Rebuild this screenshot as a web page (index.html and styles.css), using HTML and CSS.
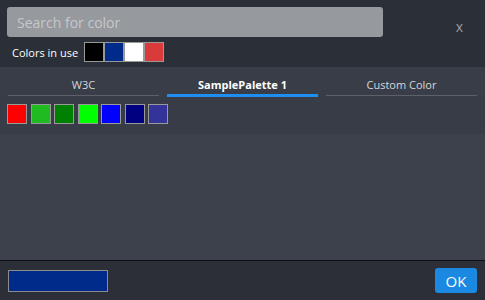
FILE: index.html
```html
<!DOCTYPE html>
<html lang="en">
<head>
  <meta charset="UTF-8">
  <title>Color Picker</title>
  <link rel="stylesheet" href="styles.css">
</head>
<body>
  <div class="picker">
    <div class="header">
      <div class="search-row">
        <input class="search" type="text" placeholder="Search for color">
        <span class="close">x</span>
      </div>
      <div class="in-use">
        <span class="in-use-label">Colors in use</span>
        <div class="swatch" style="background:#000000"></div>
        <div class="swatch" style="background:#002b8a"></div>
        <div class="swatch" style="background:#ffffff"></div>
        <div class="swatch" style="background:#d93a3a"></div>
      </div>
    </div>

    <div class="tabs">
      <div class="tab">W3C</div>
      <div class="tab active">SamplePalette 1</div>
      <div class="tab">Custom Color</div>
    </div>

    <div class="palette">
      <div class="swatch" style="background:#ff0000"></div>
      <div class="swatch" style="background:#20bb20"></div>
      <div class="swatch" style="background:#008000"></div>
      <div class="swatch" style="background:#00ff00"></div>
      <div class="swatch" style="background:#0000ff"></div>
      <div class="swatch" style="background:#000080"></div>
      <div class="swatch" style="background:#333399"></div>
    </div>

    <div class="content"></div>

    <div class="footer">
      <div class="current"></div>
      <button class="ok">OK</button>
    </div>
  </div>
</body>
</html>
```
FILE: styles.css
```css
body {
  margin: 0;
  font-family: "Open Sans", sans-serif;
  background-color: #2b2f38;
}

.picker {
  height: 300px;
  display: flex;
  flex-direction: column;
}

.header {
  padding: 7px 7px 5px 7px;
  background-color: #2b2f38;
}

.search-row {
  display: flex;
}

.search {
  width: 376px;
  height: 30px;
  box-sizing: border-box;
  border: none;
  border-radius: 3px;
  background-color: #96999e;
  padding: 0 10px;
  font-family: "Open Sans", sans-serif;
  font-size: 14px;
  color: #ffffff;
  outline: none;
}

.search::placeholder {
  color: #c6c8cb;
}

.close {
  margin-left: auto;
  margin-right: 15px;
  padding-top: 13px;
  font-size: 14px;
  line-height: 14px;
  color: #9a9ca1;
}

.in-use {
  display: flex;
  align-items: center;
  margin-top: 5px;
  padding-left: 5px;
}

.in-use-label {
  font-size: 11px;
  color: #ffffff;
  margin-right: 6px;
}

.swatch {
  width: 20px;
  height: 20px;
  box-sizing: border-box;
  border: 1px solid #999999;
}

.tabs {
  display: flex;
  gap: 8px;
  padding: 0 8px;
  background-color: #383d48;
}

.tab {
  flex: 1;
  height: 29px;
  box-sizing: border-box;
  padding-top: 10px;
  margin-bottom: 1px;
  text-align: center;
  font-size: 11px;
  line-height: 16px;
  color: #d6d8db;
  border-bottom: 1px solid #5c6068;
}

.tab.active {
  height: 30px;
  margin-bottom: 0;
  font-weight: bold;
  color: #ffffff;
  border-bottom: 3px solid #1e8ff0;
}

.palette {
  display: flex;
  gap: 3.5px;
  padding: 7px 7px 10px 7px;
  background-color: #373c47;
}

.content {
  flex: 1;
  background-color: #3c414c;
}

.footer {
  display: flex;
  justify-content: space-between;
  align-items: center;
  height: 40px;
  box-sizing: border-box;
  padding: 0 8px;
  border-top: 1px solid #0d0f12;
  background-color: #2c2f38;
}

.current {
  width: 100px;
  height: 22px;
  box-sizing: border-box;
  border: 1px solid #8c8c8c;
  background-color: #002b8a;
}

.ok {
  width: 42px;
  height: 25px;
  border: none;
  border-radius: 3px;
  background-color: #1b88e2;
  color: #ffffff;
  font-family: "Open Sans", sans-serif;
  font-size: 15px;
  padding: 0;
}
```
